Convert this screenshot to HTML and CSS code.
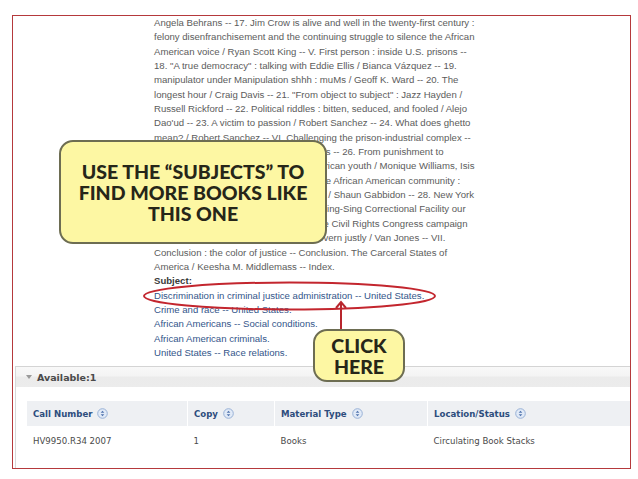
FILE: index.html
```html
<!DOCTYPE html>
<html>
<head>
<meta charset="utf-8">
<link rel="stylesheet" href="styles.css">
</head>
<body>
<div class="frame">
  <div class="record">
    <p class="contents">Angela Behrans -- 17. Jim Crow is alive and well in the twenty-first century :<br>
felony disenfranchisement and the continuing struggle to silence the African<br>
American voice / Ryan Scott King -- V. First person : inside U.S. prisons --<br>
18. "A true democracy" : talking with Eddie Ellis / Bianca Vázquez -- 19.<br>
manipulator under Manipulation shhh : muMs / Geoff K. Ward -- 20. The<br>
longest hour / Craig Davis -- 21. "From object to subject" : Jazz Hayden /<br>
Russell Rickford -- 22. Political riddles : bitten, seduced, and fooled / Alejo<br>
Dao'ud -- 23. A victim to passion / Robert Sanchez -- 24. What does ghetto<br>
mean? / Robert Sanchez -- VI. Challenging the prison-industrial complex --<br>
25. Mass incarcerations and all its victims -- 26. From punishment to<br>
rehabilitation : programs for African American youth / Monique Williams, Isis<br>
Sapp-Grant -- 27. Criminal justice and the African American community :<br>
issues of race, crime, and public policies / Shaun Gabbidon -- 28. New York<br>
Theological Seminary's program at the Sing-Sing Correctional Facility our<br>
stories, our own lives -- 29. Revisiting the Civil Rights Congress campaign<br>
against genocide -- 30. The power to govern justly / Van Jones -- VII.<br>
Conclusion : the color of justice -- Conclusion. The Carceral States of<br>
America / Keesha M. Middlemass -- Index.</p>
    <div class="subject-label">Subject:</div>
    <ul class="subjects">
      <li><a href="#">Discrimination in criminal justice administration -- United States.</a></li>
      <li><a href="#">Crime and race -- United States.</a></li>
      <li><a href="#">African Americans -- Social conditions.</a></li>
      <li><a href="#">African American criminals.</a></li>
      <li><a href="#">United States -- Race relations.</a></li>
    </ul>
  </div>

  <div class="avail">
    <div class="avail-head">
      <svg class="tri" width="6" height="4" viewBox="0 0 6 4"><polygon points="0,0 6,0 3,4" fill="#9a9a9a"/></svg>
      <span>Available:1</span>
    </div>
    <table class="holdings">
      <thead>
        <tr>
          <th class="c1">Call Number <svg class="sort" width="11" height="11" viewBox="0 0 11 11"><circle cx="5.5" cy="5.5" r="4.8" fill="#e1eaf7" stroke="#98b1d6"/><polygon points="3.7,4.8 7.3,4.8 5.5,2.8" fill="#4f73ad"/><polygon points="3.7,6.2 7.3,6.2 5.5,8.2" fill="#4f73ad"/></svg></th>
          <th class="c2">Copy <svg class="sort" width="11" height="11" viewBox="0 0 11 11"><circle cx="5.5" cy="5.5" r="4.8" fill="#e1eaf7" stroke="#98b1d6"/><polygon points="3.7,4.8 7.3,4.8 5.5,2.8" fill="#4f73ad"/><polygon points="3.7,6.2 7.3,6.2 5.5,8.2" fill="#4f73ad"/></svg></th>
          <th class="c3">Material Type <svg class="sort" width="11" height="11" viewBox="0 0 11 11"><circle cx="5.5" cy="5.5" r="4.8" fill="#e1eaf7" stroke="#98b1d6"/><polygon points="3.7,4.8 7.3,4.8 5.5,2.8" fill="#4f73ad"/><polygon points="3.7,6.2 7.3,6.2 5.5,8.2" fill="#4f73ad"/></svg></th>
          <th class="c4">Location/Status <svg class="sort" width="11" height="11" viewBox="0 0 11 11"><circle cx="5.5" cy="5.5" r="4.8" fill="#e1eaf7" stroke="#98b1d6"/><polygon points="3.7,4.8 7.3,4.8 5.5,2.8" fill="#4f73ad"/><polygon points="3.7,6.2 7.3,6.2 5.5,8.2" fill="#4f73ad"/></svg></th>
        </tr>
      </thead>
      <tbody>
        <tr>
          <td>HV9950.R34 2007</td>
          <td>1</td>
          <td>Books</td>
          <td>Circulating Book Stacks</td>
        </tr>
      </tbody>
    </table>
  </div>

  <svg class="annot" width="617" height="451" viewBox="0 0 617 451">
    <ellipse cx="276.5" cy="280" rx="145.5" ry="13.5" fill="none" stroke="#c3262e" stroke-width="2"/>
    <line x1="328" y1="286" x2="328" y2="313" stroke="#b8262d" stroke-width="2"/>
    <polyline points="323,292 328,286 333,292" fill="none" stroke="#b8262d" stroke-width="2"/>
  </svg>

  <div class="callout callout-subjects">USE THE “SUBJECTS” TO<br>FIND MORE BOOKS LIKE<br>THIS ONE</div>
  <div class="callout callout-click">CLICK<br>HERE</div>
</div>
</body>
</html>
```

FILE: styles.css
```css
html, body {
  margin: 0;
  padding: 0;
  background: #ffffff;
}

body {
  width: 638px;
  height: 479px;
  overflow: hidden;
}

.frame {
  position: relative;
  box-sizing: border-box;
  margin: 15px 0 0 12px;
  width: 619px;
  height: 454px;
  border: 1px solid #b5393c;
  overflow: hidden;
}

.record {
  padding: 0 0 0 141px;
  font-family: "Liberation Sans", Arial, sans-serif;
  font-size: 9.6px;
  line-height: 14.35px;
  color: #5c5c5c;
}

.contents {
  margin: 0;
  white-space: nowrap;
}

.subject-label {
  font-weight: bold;
  color: #3a3a3a;
}

.subjects {
  list-style: none;
  margin: 0;
  padding: 0;
}

.subjects a {
  color: #33558a;
  text-decoration: none;
}

.avail {
  margin: 6px 0 0 2px;
  border-top: 1px solid #d4d4d4;
  border-left: 1px solid #d8d8d8;
  height: 120px;
}

.avail-head {
  display: flex;
  align-items: center;
  height: 20px;
  padding-left: 10px;
  background: linear-gradient(#f8f8f8, #f4f4f4 45%, #ebebeb 50%, #ececec);
  font-family: "DejaVu Sans", Verdana, sans-serif;
  font-size: 9.5px;
  font-weight: bold;
  color: #4a4a4a;
}

.tri {
  margin-right: 5px;
}

.holdings {
  margin: 14px 0 0 11px;
  width: 603px;
  border-collapse: collapse;
  font-family: "DejaVu Sans", Verdana, sans-serif;
  font-size: 8.6px;
}

.holdings th {
  height: 25px;
  padding: 0 0 0 6px;
  text-align: left;
  background: #eef0f3;
  color: #2d4d7d;
  font-weight: bold;
  border-right: 1px solid #ffffff;
  white-space: nowrap;
}

.holdings th.c4 {
  border-right: none;
}

.holdings .c1 { width: 154px; }
.holdings .c2 { width: 80px; }
.holdings .c3 { width: 146px; }

.sort {
  vertical-align: -2px;
  margin-left: 2px;
}

.holdings td {
  height: 30px;
  padding: 0 0 0 6px;
  color: #4a4a4a;
}

.annot {
  position: absolute;
  left: 0;
  top: 0;
  pointer-events: none;
}

.callout {
  position: absolute;
  box-sizing: border-box;
  display: flex;
  align-items: center;
  justify-content: center;
  text-align: center;
  background: #fdf7a3;
  border: 2px solid #6d6d52;
  border-radius: 14px;
  font-family: Lato, "Open Sans", sans-serif;
  font-weight: 900;
  color: #262619;
  font-size: 19.5px;
  line-height: 21px;
  white-space: nowrap;
}

.callout-subjects {
  left: 46px;
  top: 124px;
  width: 268px;
  height: 104px;
}

.callout-click {
  left: 300px;
  top: 313px;
  width: 92px;
  height: 53px;
}
```
